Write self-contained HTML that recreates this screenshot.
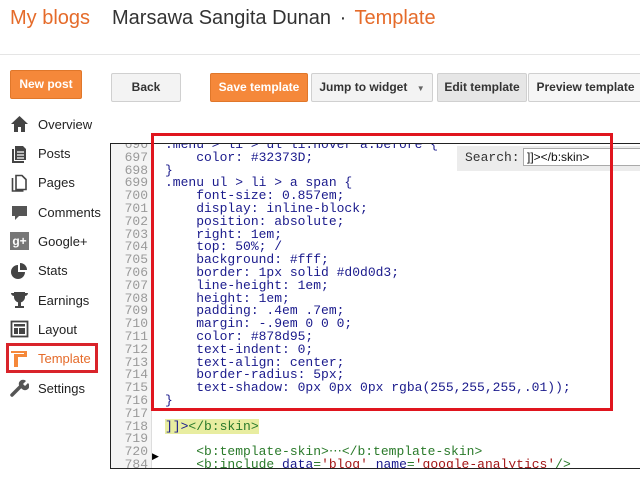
<!DOCTYPE html>
<html><head><style>
*{margin:0;padding:0;box-sizing:border-box}
body{width:640px;height:480px;background:#fff;position:relative;overflow:hidden;font-family:"Liberation Sans",Arial,sans-serif}
.a{position:absolute}
.hd{top:7px;font-size:20px;white-space:nowrap}
.btn{position:absolute;top:73px;height:29px;border:1px solid #d0d0d0;background:#f3f3f3;border-radius:2px;font-size:12px;font-weight:bold;color:#333;text-align:center;line-height:27px}
.or{background:#f5883a;border-color:#e0772a;color:#fff}
.nav{position:absolute;left:38px;font-size:13px;color:#222}
.ic{position:absolute;left:10px;width:19px;height:18px}
.code{left:110px;top:143px;width:540px;height:326px;border:1px solid #222;background:#fff;overflow:hidden}
.gut{position:absolute;left:0;top:0;width:41px;height:100%;background:#f4f4f4;border-right:1px solid #ddd}
pre{font-family:"Liberation Mono","Courier New",monospace;font-size:13px;line-height:12.8px;position:absolute;top:-5px}
.ln{right:auto;left:0;width:37px;text-align:right;color:#999}
.cd{left:54px;color:#1a1a8c}
</style></head><body>
<div class="a hd" style="left:10px;color:#e56b2a">My blogs</div>
<div class="a hd" style="left:112px;color:#333">Marsawa Sangita Dunan <span style="margin:0 3px">·</span> <span style="color:#e56b2a">Template</span></div>
<div class="a" style="left:0;top:54px;width:640px;height:1px;background:#e5e5e5"></div>

<div class="btn or" style="left:10px;top:70px;width:72px">New post</div>
<div class="btn" style="left:111px;width:70px">Back</div>
<div class="btn or" style="left:210px;width:98px">Save template</div>
<div class="btn" style="left:311px;width:122px">Jump to widget <span style="font-size:8px;color:#666;margin-left:6px">▼</span></div>
<div class="btn" style="left:437px;width:90px;background:#e6e6e6">Edit template</div>
<div class="btn" style="left:528px;width:115px;background:#f6f6f6">Preview template</div>

<svg class="ic" style="top:115px" viewBox="0 0 19 18"><path d="M1 9 L9.5 1 L18 9 L15 9 L15 17 L11 17 L11 12 L8 12 L8 17 L4 17 L4 9Z" fill="#444"/></svg>
<div class="nav" style="top:117px">Overview</div>
<svg class="ic" style="top:145px" viewBox="0 0 19 18"><path d="M2 4h2v12h10v2H2z M5 1h8l3 3v11H5z" fill="#444"/><path d="M7 7h7M7 10h7M7 13h7" stroke="#fff" stroke-width="1.2"/></svg>
<div class="nav" style="top:146px">Posts</div>
<svg class="ic" style="top:174px" viewBox="0 0 19 18"><path d="M2.5 4v13h11M6 1.5h6l4 4v10H6z" fill="none" stroke="#444" stroke-width="1.6"/></svg>
<div class="nav" style="top:175px">Pages</div>
<svg class="ic" style="top:204px" viewBox="0 0 19 18"><path d="M2 2h15v10H9l-4 4v-4H2z" fill="#555"/></svg>
<div class="nav" style="top:205px">Comments</div>
<div class="ic" style="top:232px;background:#777;color:#fff;font-size:12px;font-weight:bold;line-height:18px;text-align:center">g+</div>
<div class="nav" style="top:234px">Google+</div>
<svg class="ic" style="top:262px" viewBox="0 0 19 18"><path d="M8 3A7 7 0 1 0 15 10H8z" fill="#444"/><path d="M10 1A7 7 0 0 1 17 8H10z" fill="#444"/></svg>
<div class="nav" style="top:263px">Stats</div>
<svg class="ic" style="top:291px" viewBox="0 0 19 18"><path d="M4 1h11v5a5.5 5.5 0 0 1-11 0z M1 2h3v3a3 3 0 0 1-3-3z M15 2h3a3 3 0 0 1-3 3z M8 11h3v4h3v2H5v-2h3z" fill="#444"/></svg>
<div class="nav" style="top:293px">Earnings</div>
<svg class="ic" style="top:320px" viewBox="0 0 19 18"><rect x="1.5" y="1.5" width="16" height="15" fill="none" stroke="#444" stroke-width="1.8"/><rect x="4" y="4" width="11" height="2.5" fill="#444"/><rect x="4" y="8" width="4" height="6" fill="#444"/><rect x="9" y="8" width="6" height="6" fill="#444"/></svg>
<div class="nav" style="top:322px">Layout</div>
<div class="a" style="left:6px;top:343px;width:92px;height:30px;border:3px solid #d9232a"></div>
<svg class="ic" style="top:350px" viewBox="0 0 19 18"><path d="M1 1h16v6H8v10H4V4h10V3H1z" fill="#f5883a"/></svg>
<div class="nav" style="top:351px;color:#e56b2a">Template</div>
<svg class="ic" style="top:379px" viewBox="0 0 19 18"><path d="M2 16L11 7" stroke="#555" stroke-width="3.5" stroke-linecap="round"/><path d="M10 8a4 4 0 0 1 6-6l-3 3 2 2 3-3a4 4 0 0 1-6 6z" fill="#555"/></svg>
<div class="nav" style="top:381px">Settings</div>

<div class="a code">
<div class="gut"></div>
<pre class="ln">696
697
698
699
700
701
702
703
704
705
706
707
708
709
710
711
712
713
714
715
716
717
718
719
720
784</pre>
<pre class="cd">.menu &gt; li &gt; ul li:hover a:before {
    color: #32373D;
}
.menu ul &gt; li &gt; a span {
    font-size: 0.857em;
    display: inline-block;
    position: absolute;
    right: 1em;
    top: 50%; /
    background: #fff;
    border: 1px solid #d0d0d3;
    line-height: 1em;
    height: 1em;
    padding: .4em .7em;
    margin: -.9em 0 0 0;
    color: #878d95;
    text-indent: 0;
    text-align: center;
    border-radius: 5px;
    text-shadow: 0px 0px 0px rgba(255,255,255,.01));
}

<span style="background:#e8eda0;color:#1a1a8c">]]&gt;<span style="color:#2a7a2a">&lt;/b:skin&gt;</span></span>

    <span style="color:#2a7a2a">&lt;b:template-skin&gt;⋯&lt;/b:template-skin&gt;</span>
    <span style="color:#2a7a2a">&lt;b:include <u style="color:#1a1a8c">data</u>=<span style="color:#a31515">'blog'</span> <u style="color:#1a1a8c">name</u>=<span style="color:#a31515">'google-analytics'</span>/&gt;</span></pre>
<div class="a" style="left:41px;top:307px;font-size:9px;color:#000">▶</div>
<div class="a" style="left:346px;top:2px;width:200px;height:25px;background:#ececec"></div>
<div class="a" style="left:354px;top:6px;font-family:'Liberation Mono',monospace;font-size:13px;color:#333">Search:</div>
<div class="a" style="left:412px;top:4px;width:130px;height:18px;border:1px solid #aaa;background:#fff;font-size:12px;line-height:16px;padding-left:3px;color:#111">]]&gt;&lt;/b:skin&gt;</div>
</div>
<div class="a" style="left:151px;top:133px;width:462px;height:278px;border:3px solid #e0151e"></div>
</body></html>
